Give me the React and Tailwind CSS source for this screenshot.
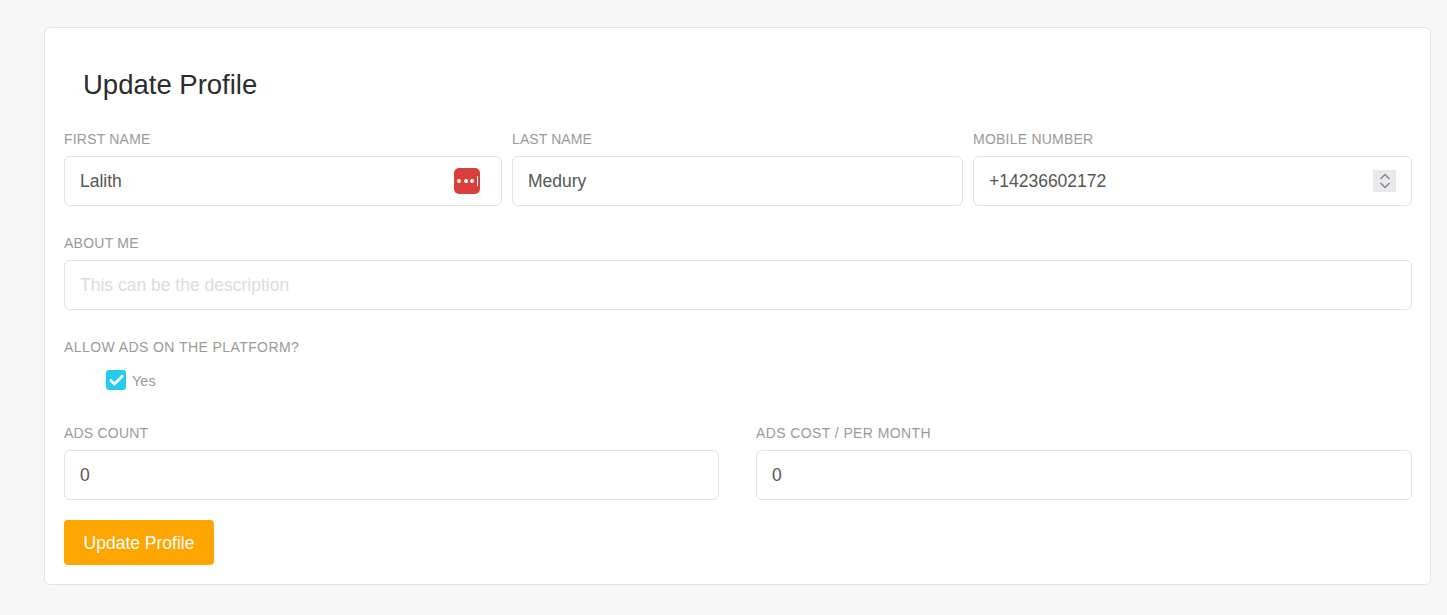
import { Check } from "lucide-react";

function Field({ label, value, placeholder, tracking, children }) {
  return (
    <div>
      <label className={"block h-[21px] pt-[1px] text-[14px] leading-[21px] uppercase text-[#9a9a9a] " + (tracking || "tracking-[0.2px]")}>{label}</label>
      <div className="relative mt-[7px]">
        <input
          type="text"
          readOnly
          value={value}
          placeholder={placeholder}
          className="block w-full h-[50px] px-[15px] pt-[1px] bg-white border border-[#e3e3e3] rounded-[6px] text-[17.5px] text-[#565656] placeholder:text-[#dcdcdc] outline-none"
        />
        {children}
      </div>
    </div>
  );
}

function App() {
  return (
    <div className="min-h-screen bg-[#f7f7f7] pt-[27px] pl-[44px] pr-[16px] pb-[30px] font-['Liberation_Sans',Arial,sans-serif]">
      <div className="h-[558px] bg-white border border-[#e3e3e3] rounded-[6px] pl-[19px] pr-[18px] pt-[37px]">
        <h2 className="pl-[19px] h-[40px] text-[27.5px] leading-[40px] text-[#2c2c2c]">Update Profile</h2>

        <div className="mt-[23px] grid grid-cols-[438px_451px_439px] gap-x-[10px]">
          <Field label="First Name" value="Lalith">
            <div className="absolute right-[22px] top-[12px] w-[26px] h-[26px] bg-[#db3f3b] rounded-[5px] flex items-center gap-[2.5px] pl-[3px]">
              <span className="w-[4px] h-[4px] rounded-full bg-white" />
              <span className="w-[4px] h-[4px] rounded-full bg-white" />
              <span className="w-[4px] h-[4px] rounded-full bg-white" />
              <span className="w-[1px] h-[10px] bg-white" />
            </div>
          </Field>
          <Field label="Last Name" value="Medury" tracking="tracking-[0.1px]" />
          <Field label="Mobile Number" value="+14236602172" tracking="tracking-[0.23px]">
            <div className="absolute right-[16px] top-[14px] w-[23px] h-[22px] bg-[#e9e9ed] flex items-center justify-center">
              <svg width="12" height="16" viewBox="0 0 12 16" fill="none" stroke="#85858d" strokeWidth="1.5">
                <path d="M1.5 6 L6 1.5 L10.5 6" />
                <path d="M1.5 10 L6 14.5 L10.5 10" />
              </svg>
            </div>
          </Field>
        </div>

        <div className="mt-[26px]">
          <Field label="About Me" value="" placeholder="This can be the description" tracking="tracking-[0.25px]" />
        </div>

        <div className="mt-[26px]">
          <div className="h-[21px] pt-[1px] text-[14px] leading-[21px] uppercase tracking-[0.42px] text-[#9a9a9a]">Allow ads on the platform?</div>
          <div className="mt-[13px] ml-[42px] flex items-center h-[20px]">
            <span className="w-[20px] h-[20px] rounded-[3px] bg-[#23ccef] flex items-center justify-center text-white">
              <Check size={17} strokeWidth={4} />
            </span>
            <span className="ml-[6px] pt-[3px] text-[14.5px] text-[#9a9a9a]">Yes</span>
          </div>
        </div>

        <div className="mt-[32px] grid grid-cols-[655px_656px] gap-x-[37px]">
          <Field label="Ads Count" value="0" tracking="tracking-[0.2px]" />
          <Field label="Ads Cost / Per Month" value="0" tracking="tracking-[0.4px]" />
        </div>

        <button className="block mt-[20px] w-[150px] h-[45px] pt-[1px] bg-[#ffa500] rounded-[4px] text-white text-[17.5px]">
          Update Profile
        </button>
      </div>
    </div>
  );
}

export default App;
